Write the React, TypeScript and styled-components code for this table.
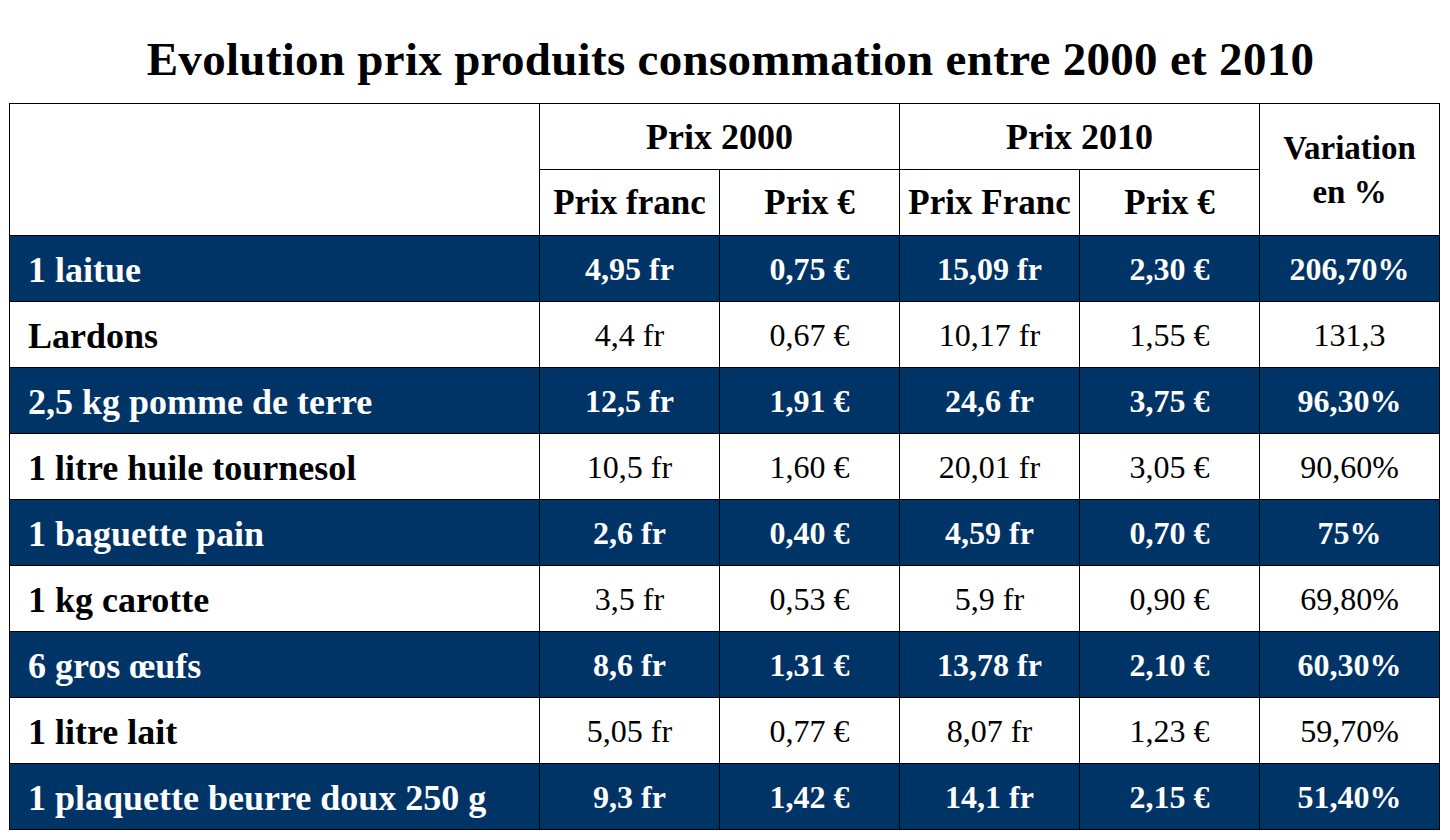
import React from 'react';
import styled, { createGlobalStyle } from 'styled-components';

const GlobalStyle = createGlobalStyle`
  html, body {
    margin: 0;
    padding: 0;
    background: #ffffff;
  }
  body {
    font-family: 'Liberation Serif', 'Times New Roman', serif;
    color: #000;
  }
`;

const Page = styled.div`
  width: 1450px;
  height: 840px;
  display: flex;
  flex-direction: column;
  padding-left: 9px;
  box-sizing: border-box;
`;

const Title = styled.h1`
  margin: 0;
  height: 103px;
  display: flex;
  align-items: center;
  justify-content: center;
  padding-left: 2px;
  padding-top: 14px;
  box-sizing: border-box;
  font-size: 47px;
  letter-spacing: 0.3px;
  font-weight: 700;
  font-family: 'Liberation Serif', serif;
  white-space: nowrap;
`;

const Table = styled.table`
  border-collapse: collapse;
  table-layout: fixed;
  width: 1431px;
`;

const Row = styled.tr<{ $dark?: boolean }>`
  height: 66px;
  background: ${(p) => (p.$dark ? '#003366' : '#ffffff')};
  color: ${(p) => (p.$dark ? '#ffffff' : '#000000')};
`;

const HeadCell = styled.th<{ $size?: number }>`
  border: 1px solid #000;
  padding: 0;
  font-weight: 700;
  font-size: ${(p) => p.$size ?? 35}px;
  text-align: center;
  vertical-align: middle;
  line-height: 44px;
`;

const Label = styled.td`
  border: 1px solid #000;
  padding: 2px 0 0 18px;
  font-weight: 700;
  font-size: 36px;
  text-align: left;
  vertical-align: middle;
  white-space: nowrap;
`;

const Value = styled.td<{ $bold?: boolean }>`
  border: 1px solid #000;
  padding: 2px 0 0 0;
  font-weight: ${(p) => (p.$bold ? 700 : 400)};
  font-size: 32px;
  text-align: center;
  vertical-align: middle;
  white-space: nowrap;
`;

const rows: [string, string, string, string, string, string][] = [
  ['1 laitue', '4,95 fr', '0,75 €', '15,09 fr', '2,30 €', '206,70%'],
  ['Lardons', '4,4 fr', '0,67 €', '10,17 fr', '1,55 €', '131,3'],
  ['2,5 kg pomme de terre', '12,5 fr', '1,91 €', '24,6 fr', '3,75 €', '96,30%'],
  ['1 litre huile tournesol', '10,5 fr', '1,60 €', '20,01 fr', '3,05 €', '90,60%'],
  ['1 baguette pain', '2,6 fr', '0,40 €', '4,59 fr', '0,70 €', '75%'],
  ['1 kg carotte', '3,5 fr', '0,53 €', '5,9 fr', '0,90 €', '69,80%'],
  ['6 gros œufs', '8,6 fr', '1,31 €', '13,78 fr', '2,10 €', '60,30%'],
  ['1 litre lait', '5,05 fr', '0,77 €', '8,07 fr', '1,23 €', '59,70%'],
  ['1 plaquette beurre doux 250 g', '9,3 fr', '1,42 €', '14,1 fr', '2,15 €', '51,40%'],
];

export default function App() {
  return (
    <>
      <GlobalStyle />
      <Page>
        <Title>Evolution prix produits consommation entre 2000 et 2010</Title>
        <Table>
          <colgroup>
            <col style={{ width: 530 }} />
            <col style={{ width: 180 }} />
            <col style={{ width: 180 }} />
            <col style={{ width: 180 }} />
            <col style={{ width: 180 }} />
            <col style={{ width: 180 }} />
          </colgroup>
          <thead>
            <Row>
              <HeadCell rowSpan={2} />
              <HeadCell colSpan={2} $size={36}>Prix 2000</HeadCell>
              <HeadCell colSpan={2} $size={36}>Prix 2010</HeadCell>
              <HeadCell rowSpan={2} $size={33}>
                Variation
                <br />
                en %
              </HeadCell>
            </Row>
            <Row>
              <HeadCell>Prix franc</HeadCell>
              <HeadCell>Prix €</HeadCell>
              <HeadCell>Prix Franc</HeadCell>
              <HeadCell>Prix €</HeadCell>
            </Row>
          </thead>
          <tbody>
            {rows.map((r, i) => {
              const dark = i % 2 === 0;
              return (
                <Row key={r[0]} $dark={dark}>
                  <Label>{r[0]}</Label>
                  {r.slice(1).map((v, j) => (
                    <Value key={j} $bold={dark}>
                      {v}
                    </Value>
                  ))}
                </Row>
              );
            })}
          </tbody>
        </Table>
      </Page>
    </>
  );
}
